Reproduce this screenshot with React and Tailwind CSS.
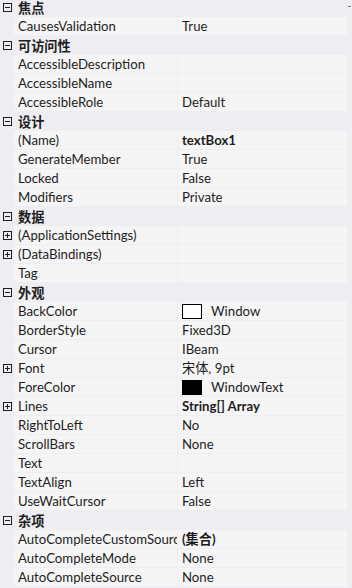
const FONT = { fontFamily: '"Segoe UI", Lato, "Noto Sans CJK SC", sans-serif' };

const groups = [
  { title: '焦点', rows: [{ name: 'CausesValidation', value: 'True' }] },
  {
    title: '可访问性',
    rows: [
      { name: 'AccessibleDescription', value: '' },
      { name: 'AccessibleName', value: '' },
      { name: 'AccessibleRole', value: 'Default' },
    ],
  },
  {
    title: '设计',
    rows: [
      { name: '(Name)', value: 'textBox1', bold: true },
      { name: 'GenerateMember', value: 'True' },
      { name: 'Locked', value: 'False' },
      { name: 'Modifiers', value: 'Private' },
    ],
  },
  {
    title: '数据',
    rows: [
      { name: '(ApplicationSettings)', value: '', expand: true },
      { name: '(DataBindings)', value: '', expand: true },
      { name: 'Tag', value: '' },
    ],
  },
  {
    title: '外观',
    rows: [
      { name: 'BackColor', value: 'Window', swatch: 'white' },
      { name: 'BorderStyle', value: 'Fixed3D' },
      { name: 'Cursor', value: 'IBeam' },
      { name: 'Font', value: '宋体, 9pt', expand: true },
      { name: 'ForeColor', value: 'WindowText', swatch: 'black' },
      { name: 'Lines', value: 'String[] Array', bold: true, expand: true },
      { name: 'RightToLeft', value: 'No' },
      { name: 'ScrollBars', value: 'None' },
      { name: 'Text', value: '' },
      { name: 'TextAlign', value: 'Left' },
      { name: 'UseWaitCursor', value: 'False' },
    ],
  },
  {
    title: '杂项',
    rows: [
      { name: 'AutoCompleteCustomSource', value: '(集合)', bold: true },
      { name: 'AutoCompleteMode', value: 'None' },
      { name: 'AutoCompleteSource', value: 'None' },
    ],
  },
];

function Toggle({ open }) {
  return (
    <span className="relative block h-[9px] w-[9px] border border-[#1e1e1e]">
      <span className="absolute left-[1px] top-[3px] h-[1px] w-[5px] bg-[#1e1e1e]" />
      {!open && <span className="absolute left-[3px] top-[1px] h-[5px] w-[1px] bg-[#1e1e1e]" />}
    </span>
  );
}

function PropRow({ row }) {
  return (
    <div className="flex h-[19px]">
      <div className="flex w-[14px] shrink-0 items-center pl-[3px]">
        {row.expand && <Toggle open={false} />}
      </div>
      <div className="flex w-[333px] border-b border-[#eeeef2] bg-[#f5f5f5]">
        <div className="w-[164px] shrink-0 overflow-hidden whitespace-nowrap border-r border-[#eeeef2] pl-[4px] leading-[18px]">
          {row.name}
        </div>
        <div className="flex min-w-0 flex-1 items-center overflow-hidden whitespace-nowrap pl-[4px]">
          {row.swatch && (
            <span
              className={
                row.swatch === 'white'
                  ? 'mr-[9px] h-[15px] w-[20px] shrink-0 border border-black bg-white'
                  : 'mr-[9px] h-[15px] w-[20px] shrink-0 bg-black'
              }
            />
          )}
          <span className={row.bold ? 'font-bold leading-[18px]' : 'leading-[18px]'}>{row.value}</span>
        </div>
      </div>
    </div>
  );
}

export default function App() {
  return (
    <div className="h-[588px] w-[352px] overflow-hidden bg-[#eeeef2] text-[13.2px] text-[#1e1e1e]" style={FONT}>
      <div className="relative -mt-[2px]">
        {groups.map((g) => (
          <div key={g.title}>
            <div className="flex h-[19px] items-center">
              <div className="flex w-[14px] shrink-0 items-center pl-[3px]">
                <Toggle open />
              </div>
              <span className="pl-[4px] font-bold leading-[18px]">{g.title}</span>
            </div>
            {g.rows.map((r) => (
              <PropRow key={r.name} row={r} />
            ))}
          </div>
        ))}
        <span className="absolute right-[1px] top-[8px] h-[1px] w-[3px] bg-[#7a7a7a]" />
      </div>
    </div>
  );
}
